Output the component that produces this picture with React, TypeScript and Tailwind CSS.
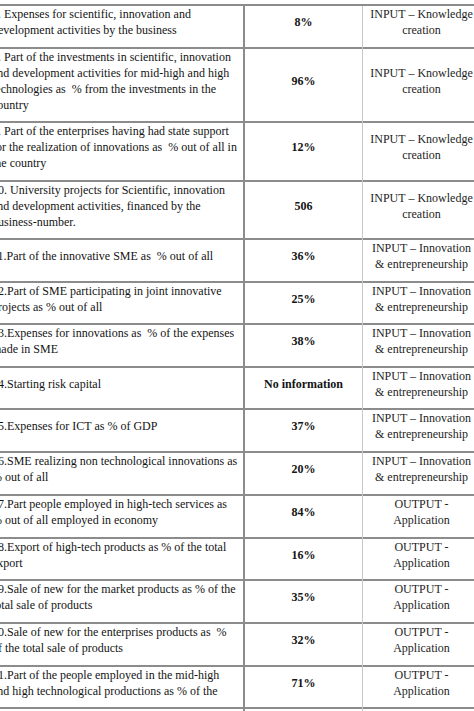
import React from 'react';

type Row = {
  h: string;
  lines: string[];
  value: string;
  cat: string[];
};

const KNOW = ['INPUT – Knowledge', 'creation'];
const INNO = ['INPUT – Innovation', '& entrepreneurship'];
const OUT = ['OUTPUT -', 'Application'];

const rows: Row[] = [
  {
    h: 'h-[45px] border-t-2',
    lines: ['7. Expenses for scientific, innovation and', 'development activities by the business'],
    value: '8%',
    cat: KNOW,
  },
  {
    h: 'h-[74px]',
    lines: [
      '8. Part of the investments in scientific, innovation',
      'and development activities for mid-high and high',
      'technologies as \u00a0% from the investments in the',
      'country',
    ],
    value: '96%',
    cat: KNOW,
  },
  {
    h: 'h-[59px]',
    lines: [
      '9. Part of the enterprises having had state support',
      'for the realization of innovations as \u00a0% out of all in',
      'the country',
    ],
    value: '12%',
    cat: KNOW,
  },
  {
    h: 'h-[58px]',
    lines: [
      '10. University projects for Scientific, innovation',
      'and development activities, financed by the',
      'business-number.',
    ],
    value: '506',
    cat: KNOW,
  },
  { h: 'h-[43px]', lines: ['11.Part of the innovative SME as \u00a0% out of all'], value: '36%', cat: INNO },
  {
    h: 'h-[42px]',
    lines: ['12.Part of SME participating in joint innovative', 'projects as % out of all'],
    value: '25%',
    cat: INNO,
  },
  {
    h: 'h-[43px]',
    lines: ['13.Expenses for innovations as \u00a0% of the expenses', 'made in SME'],
    value: '38%',
    cat: INNO,
  },
  { h: 'h-[42px]', lines: ['14.Starting risk capital'], value: 'No information', cat: INNO },
  { h: 'h-[43px]', lines: ['15.Expenses for ICT as % of GDP'], value: '37%', cat: INNO },
  {
    h: 'h-[43px]',
    lines: ['16.SME realizing non technological innovations as', '% out of all'],
    value: '20%',
    cat: INNO,
  },
  {
    h: 'h-[43px]',
    lines: ['17.Part people employed in high-tech services as', '% out of all employed in economy'],
    value: '84%',
    cat: OUT,
  },
  {
    h: 'h-[42px]',
    lines: ['18.Export of high-tech products as % of the total', 'export'],
    value: '16%',
    cat: OUT,
  },
  {
    h: 'h-[43px]',
    lines: ['19.Sale of new for the market products as % of the', 'total sale of products'],
    value: '35%',
    cat: OUT,
  },
  {
    h: 'h-[43px]',
    lines: ['20.Sale of new for the enterprises products as \u00a0%', 'of the total sale of products'],
    value: '32%',
    cat: OUT,
  },
  {
    h: 'h-[42px]',
    lines: ['21.Part of the people employed in the mid-high', 'and high technological productions as % of the'],
    value: '71%',
    cat: OUT,
  },
];

export default function App() {
  return (
    <div className="w-[474px] h-[711px] overflow-hidden bg-white pt-[4px] font-['Liberation_Serif',serif] text-[12px] leading-[16px] text-[#141414]">
      <div className="-ml-[14px] w-[494px]">
        {rows.map((r, i) => (
          <div
            key={i}
            className={`grid grid-cols-[259px_118px_117px] border-b-2 border-[#8c8c8c] ${r.h}`}
          >
            <div className="flex flex-col justify-center pb-[16px] pl-[6px] border-r-2 border-[#8c8c8c]">
              {r.lines.map((l, j) => (
                <span key={j} className="block whitespace-pre">
                  {l}
                </span>
              ))}
            </div>
            <div className="flex items-center justify-center pb-[16px] font-bold border-r border-[#c8c8c8]">
              {r.value}
            </div>
            <div className="flex flex-col items-center justify-center pb-[16px] text-[#1e1e1e]">
              {r.cat.map((c, j) => (
                <span key={j} className="block whitespace-nowrap">
                  {c}
                </span>
              ))}
            </div>
          </div>
        ))}
      </div>
    </div>
  );
}
